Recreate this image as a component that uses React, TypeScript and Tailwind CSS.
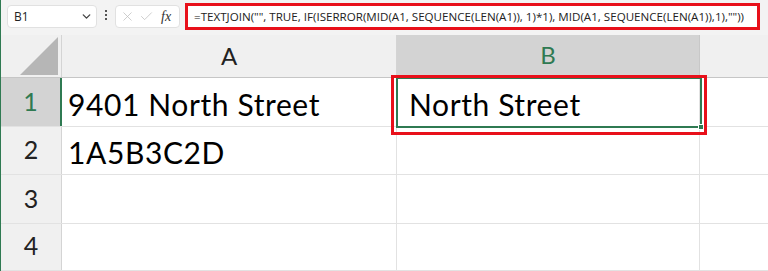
import { ChevronDown, X, Check } from "lucide-react";

const formula =
  '=TEXTJOIN("", TRUE, IF(ISERROR(MID(A1, SEQUENCE(LEN(A1)), 1)*1), MID(A1, SEQUENCE(LEN(A1)),1),""))';

const rows = [
  { n: "1", a: "9401 North Street", b: "North Street", h: "h-[49px]" },
  { n: "2", a: "1A5B3C2D", b: "", h: "h-[48px]" },
  { n: "3", a: "", b: "", h: "h-[49px]" },
  { n: "4", a: "", b: "", h: "h-[47px]" },
];

export default function App() {
  return (
    <div className="w-[768px] h-[271px] overflow-hidden bg-white border-l border-[#2f7a52] font-['Lato',sans-serif] text-black">
      {/* formula bar */}
      <div className="h-[35px] bg-[#f3f3f3] flex items-start pt-[5px] relative">
        <div className="ml-[6px] w-[90px] h-[23px] bg-white border border-[#e1e1e1] rounded-[4px] flex items-center justify-between pl-[6px] pr-[3px] font-['Open_Sans',sans-serif] text-[12px] text-[#222]">
          <span>B1</span>
          <ChevronDown size={13} strokeWidth={2.5} className="text-[#444]" />
        </div>
        <div className="w-[18px] flex justify-center pt-[5px]">
          <div className="flex flex-col gap-[2px]">
            <span className="w-[2px] h-[2px] bg-[#555]" />
            <span className="w-[2px] h-[2px] bg-[#555]" />
            <span className="w-[2px] h-[2px] bg-[#555]" />
          </div>
        </div>
        <div className="w-[65px] h-[23px] bg-white border border-[#e1e1e1] rounded-[4px] flex items-center px-[4px] gap-[4px]">
          <X size={15} strokeWidth={1.2} className="text-[#bdbdbd]" />
          <Check size={15} strokeWidth={1.2} className="text-[#bdbdbd]" />
          <span className="font-['Liberation_Serif',serif] italic text-[14px] text-[#333] leading-none ml-[3px]">
            fx
          </span>
        </div>
        <div className="ml-[5px] -mt-[2px] w-[575px] h-[27px] border-[3px] border-[#e8101a] bg-white flex items-center pl-[6px] font-['Open_Sans',sans-serif] text-[11.6px] whitespace-nowrap overflow-hidden text-[#222]">
          {formula}
        </div>
      </div>

      {/* grid */}
      <div className="relative">
        <div className="grid grid-cols-[61px_335px_303px_1fr] h-[43px] border-b border-[#c6c6c6]">
          <div className="bg-[#f0f0f0] border-r border-[#d4d4d4] flex items-end justify-end pr-[3px] pb-[2px]">
            <div className="w-0 h-0 border-l-[38px] border-l-transparent border-b-[38px] border-b-[#b6b6b6]" />
          </div>
          <div className="bg-[#f0f0f0] border-r border-[#d4d4d4] flex items-center justify-center text-[24px] text-[#222]">
            A
          </div>
          <div className="bg-[#d3d3d3] border-r border-[#c8c8c8] border-b-2 border-b-[#2f7a52] flex items-center justify-center text-[24px] text-[#2f7a52]">
            B
          </div>
          <div className="bg-[#f0f0f0]" />
        </div>

        {rows.map((r, i) => (
          <div
            key={r.n}
            className={`grid grid-cols-[61px_335px_303px_1fr] ${r.h} border-b border-[#e2e2e2]`}
          >
            <div
              className={
                i === 0
                  ? "bg-[#d3d3d3] border-r-2 border-[#2f7a52] flex items-end justify-center pb-[6px] text-[25px] text-[#2f7a52]"
                  : "bg-[#f0f0f0] border-r border-[#d4d4d4] flex items-end justify-center pb-[6px] text-[25px] text-[#222]"
              }
            >
              {r.n}
            </div>
            <div className="border-r border-[#e2e2e2] flex items-end pl-[6px] pb-[7px] text-[30px] tracking-[0.6px] leading-none">
              {r.a}
            </div>
            <div className="border-r border-[#e2e2e2] flex items-end pl-[12px] pb-[7px] text-[30px] tracking-[0.6px] leading-none">
              {r.b}
            </div>
            <div />
          </div>
        ))}

        {/* active cell */}
        <div className="absolute left-[395px] top-[42px] w-[306px] h-[51px] border-2 border-[#2f7a52] pointer-events-none">
          <div className="absolute -right-[4px] -bottom-[4px] w-[6px] h-[6px] bg-[#2f7a52] border border-white" />
        </div>
        {/* annotation */}
        <div className="absolute left-[390px] top-[40px] w-[316px] h-[60px] border-[3px] border-[#e8101a] pointer-events-none" />
      </div>
    </div>
  );
}
